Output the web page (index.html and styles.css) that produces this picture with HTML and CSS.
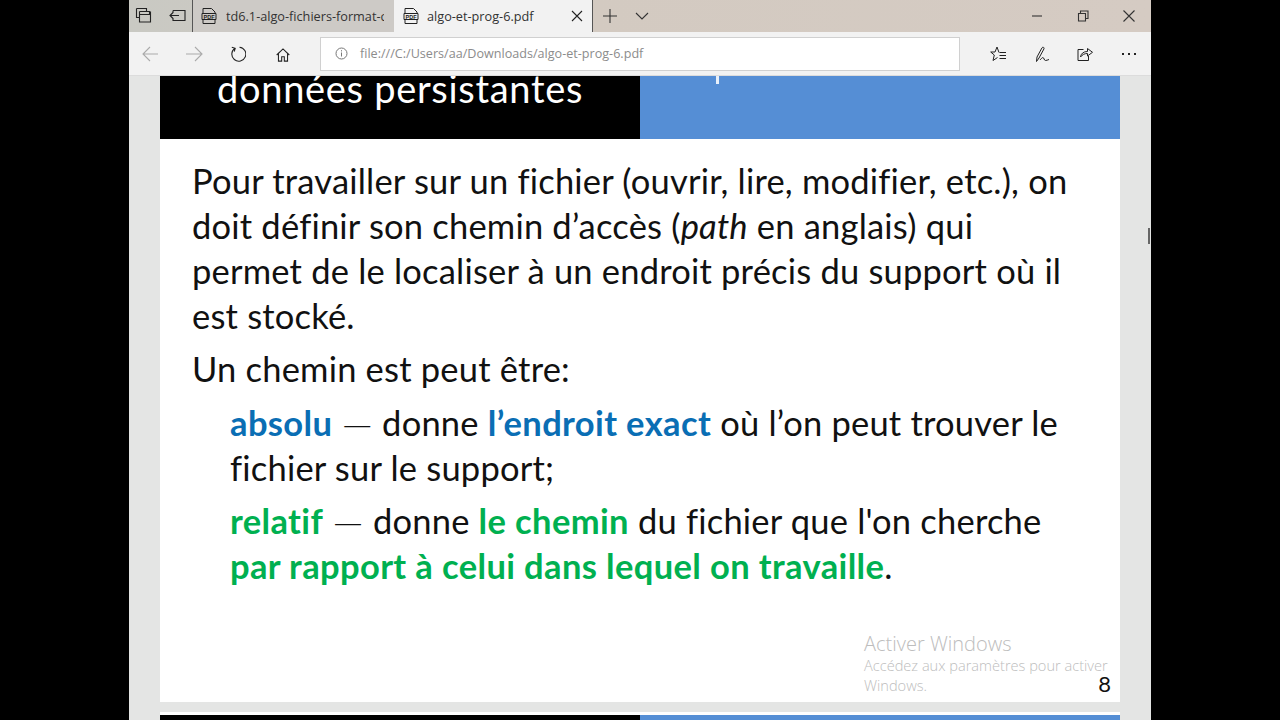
FILE: index.html
```html
<!DOCTYPE html>
<html lang="fr">
<head>
<meta charset="utf-8">
<title>algo-et-prog-6.pdf</title>
<link rel="stylesheet" href="styles.css">
</head>
<body>
<div class="window">
  <div class="tabbar">
    <div class="tab-tools">
      <svg class="ico" width="18" height="18" viewBox="0 0 18 18"><path d="M1.5 1.5h10v3M1.5 1.5v9h3M4.5 4.5h10v3M4.5 4.5v10.500h11v-10.500M4.500 7.500h11" fill="none" stroke="#222" stroke-width="1.100"/></svg>
      <svg class="ico" width="18" height="18" viewBox="0 0 18 18"><path d="M4 3.500h12v10h-12v-2.500M4 6v-2.500M1 8.500h9M4 5.500l-3 3 3 3" fill="none" stroke="#222" stroke-width="1.100"/></svg>
    </div>
    <div class="tab tab-off">
      <svg class="pdf" width="16" height="18" viewBox="0 0 16 18"><path d="M2 6V1.500h8.500L14 5v1M2 13v3.500h12V13M1 6.500h14v6H1z" fill="none" stroke="#222" stroke-width="1"/><text x="8" y="11.500" class="pdf-t">PDF</text></svg>
      <span class="tab-label">td6.1-algo-fichiers-format-c</span>
    </div>
    <div class="tab tab-on">
      <svg class="pdf" width="16" height="18" viewBox="0 0 16 18"><path d="M2 6V1.500h8.500L14 5v1M2 13v3.500h12V13M1 6.500h14v6H1z" fill="none" stroke="#222" stroke-width="1"/><text x="8" y="11.500" class="pdf-t">PDF</text></svg>
      <span class="tab-label">algo-et-prog-6.pdf</span>
      <svg class="tab-x" width="12" height="12" viewBox="0 0 12 12"><path d="M1 1l10 10M11 1L1 11" stroke="#222" stroke-width="1.100"/></svg>
    </div>
    <div class="tab-add">
      <svg width="14" height="14" viewBox="0 0 14 14"><path d="M7 0v14M0 7h14" stroke="#333" stroke-width="1.100"/></svg>
      <svg width="14" height="8" viewBox="0 0 14 8"><path d="M1 1l6 6 6-6" fill="none" stroke="#333" stroke-width="1.100"/></svg>
    </div>
    <div class="win-btns">
      <svg width="12" height="12" viewBox="0 0 12 12"><path d="M1 6h10" stroke="#333" stroke-width="1.100"/></svg>
      <svg width="12" height="12" viewBox="0 0 12 12"><path d="M1.500 3.500h7v7.500h-7zM3.500 3.500V1h7.500v7.500H8.500" fill="none" stroke="#333" stroke-width="1.100"/></svg>
      <svg width="12" height="12" viewBox="0 0 12 12"><path d="M.5.5l11 11M11.500.5l-11 11" stroke="#333" stroke-width="1.100"/></svg>
    </div>
  </div>
  <div class="toolbar">
    <div class="nav">
      <svg width="17" height="16" viewBox="0 0 17 16"><path d="M1 8h15M8 1L1 8l7 7" fill="none" stroke="#aaa" stroke-width="1.100"/></svg>
      <svg width="17" height="16" viewBox="0 0 17 16"><path d="M0 8h15M9 1l7 7-7 7" fill="none" stroke="#aaa" stroke-width="1.100"/></svg>
      <svg width="16" height="16" viewBox="0 0 16 16"><path d="M5 2.300A7 7 0 1 0 9.500 1.200M1.800 1.200L5.200 2.300 4.200 5.600" fill="none" stroke="#222" stroke-width="1.100"/></svg>
      <svg class="home" width="14" height="14" viewBox="0 0 16 16"><path d="M.8 8L8 1l7.200 7M2.800 6.500V15h3.700v-5h3v5h3.700V6.500" fill="none" stroke="#222" stroke-width="1.200"/></svg>
    </div>
    <div class="address">
      <svg width="13" height="13" viewBox="0 0 13 13"><circle cx="6.500" cy="6.500" r="5.500" fill="none" stroke="#777" stroke-width="1"/><path d="M6.500 5.500v4M6.500 3.200v1.200" stroke="#777" stroke-width="1"/></svg>
      <span class="url">file:///C:/Users/aa/Downloads/algo-et-prog-6.pdf</span>
    </div>
    <div class="actions">
      <svg width="17" height="16" viewBox="0 0 17 16"><path d="M9 6.500L7 1 5 6H.7l3.600 3L3 14.500l4.500-3M9.500 6.500h6.500M9.500 9.500h6.500M9.500 12.500h6.500" fill="none" stroke="#222" stroke-width="1"/></svg>
      <svg width="16" height="16" viewBox="0 0 16 16"><path d="M2.500 15.500L3 11 8 1.800C8.800.6 10.500 1.400 10 2.800L5 12zM6 14c1-1 2-2.500 3-2.500S10 14.500 11.500 14.500c1 0 2-.5 3.500-1" fill="none" stroke="#222" stroke-width="1"/></svg>
      <svg width="16" height="16" viewBox="0 0 16 16"><path d="M6.500 3.500H1v11h10.500V10M3.500 11c.5-3.500 3-5.500 7-5.500V2.500l5 3.800-5 3.700V7.500c-3 0-5 1-7 3.500z" fill="none" stroke="#222" stroke-width="1"/></svg>
      <span class="dots"><i></i><i></i><i></i></span>
    </div>
  </div>
  <div class="viewer">
    <div class="scroll-thumb"></div>
    <section class="slide">
      <header class="slide-head">
        <div class="head-left"><span class="head-title">données persistantes</span></div>
        <div class="head-right"><i class="head-mark"></i></div>
      </header>
      <div class="slide-body">
        <p class="para">Pour travailler sur un fichier (ouvrir, lire, modifier, etc.), on<br>doit définir son chemin d’accès (<em>path</em> en anglais) qui<br>permet de le localiser à un endroit précis du support où il<br>est stocké.</p>
        <p class="para gap">Un chemin est peut être:</p>
        <p class="para sub"><b class="blue">absolu</b> <span class="dash">—</span> donne <b class="blue">l’endroit exact</b> où l’on peut trouver le<br>fichier sur le support;</p>
        <p class="para sub sub-last"><b class="green">relatif</b> <span class="dash">—</span> donne <b class="green">le chemin</b> du fichier que l'on cherche<br><b class="green">par rapport à celui dans lequel on travaille</b>.</p>
      </div>
      <div class="activate">
        <div class="act-title">Activer Windows</div>
        <div class="act-sub">Accédez aux paramètres pour activer<br>Windows.</div>
      </div>
      <div class="page-no">8</div>
    </section>
    <section class="slide-next">
      <div class="next-left"></div>
      <div class="next-right"></div>
    </section>
  </div>
</div>
</body>
</html>
```
FILE: styles.css
```css
* { box-sizing: border-box; }
html, body { margin: 0; height: 100%; background: #000; overflow: hidden; }
body { display: flex; justify-content: center; }
.window { width: 1022px; height: 720px; display: flex; flex-direction: column; background: #f2f2f2; font-family: "Open Sans", "Liberation Sans", sans-serif; }

.tabbar { height: 32px; display: flex; align-items: stretch; background: linear-gradient(90deg, #c9c9c3 0%, #d3cac1 45%, #d5cbc3 100%); flex: none; }
.tab-tools { width: 64px; display: flex; align-items: center; gap: 16px; padding-left: 6px; border-right: 1px solid #555; }
.ico { flex: none; }
.tab { display: flex; align-items: center; font-size: 12.700px; color: #333; white-space: nowrap; overflow: hidden; }
.tab-off { width: 201px; padding-left: 8px; background: #cdcac6; }
.tab-on { width: 199px; padding-left: 9px; background: #f2f2f2; border-right: 1px solid #555; }
.tab-label { margin-left: 9px; width: 158px; overflow: hidden; }
.tab-on .tab-label { margin-left: 8px; width: 140px; }
.tab-x { margin-left: 4px; }
.pdf { flex: none; }
.pdf-t { font: 700 5.500px "Liberation Sans", sans-serif; text-anchor: middle; fill: #222; }
.tab-add { display: flex; align-items: center; gap: 18px; padding-left: 10px; }
.win-btns { margin-left: auto; display: flex; align-items: center; gap: 34px; padding-right: 16px; }

.toolbar { height: 44px; flex: none; display: flex; align-items: center; background: #f2f2f2; border-bottom: 1px solid #dcdcdc; }
.nav { width: 191px; display: flex; align-items: center; gap: 27px; padding-left: 13px; }
.home { margin: 2px 0 0 3px; }
.address { width: 640px; height: 34px; background: #fff; border: 1px solid #d0d0d0; display: flex; align-items: center; gap: 12px; padding-left: 14px; }
.url { font-size: 12.600px; color: #8c8c8c; white-space: nowrap; }
.actions { flex: 1; display: flex; align-items: center; gap: 27px; padding-left: 30px; }
.dots { display: flex; gap: 4px; margin-left: 2px; }
.dots i { width: 2px; height: 2px; background: #222; }

.viewer { flex: 1; position: relative; overflow: hidden; background: #e4e5e4; padding-left: 31px; font-family: "Lato", "Liberation Sans", sans-serif; }
.scroll-thumb { position: absolute; right: 1px; top: 152px; width: 2px; height: 16px; background: #666; }

.slide { width: 960px; height: 626px; background: #fff; position: relative; }
.slide-head { height: 63px; display: flex; overflow: hidden; }
.head-left { width: 480px; background: #000; position: relative; }
.head-title { display: block; padding-left: 57px; margin-top: -9px; font-size: 38px; line-height: 42px; color: #fff; letter-spacing: .7px; white-space: nowrap; }
.head-right { flex: 1; background: #558ed5; }
.head-mark { display: block; width: 3px; height: 8px; margin-left: 76px; background: #e8f0fa; }

.slide-body { padding: 19px 0 0 32px; color: #111; font-size: 34.500px; line-height: 45px; letter-spacing: .2px; white-space: nowrap; font-variant-ligatures: none; }
.para { margin: 0; }
.gap { margin-top: 8px; }
.sub { margin: 9px 0 0 38px; }
.sub-last { margin-top: 8px; }
.blue, .green { letter-spacing: .37px; }
.blue { color: #0a6eb4; }
.green { color: #00b050; }
.dash { font-size: 40px; font-weight: 300; line-height: 0; vertical-align: -2px; }

.activate { position: absolute; left: 704px; top: 556px; color: #bdbdbd; font-family: "Open Sans", sans-serif; font-weight: 300; white-space: nowrap; }
.act-title { font-size: 20px; line-height: 23px; }
.act-sub { font-size: 14.600px; line-height: 20px; }
.page-no { position: absolute; right: 9px; top: 595px; font-size: 22px; line-height: 26px; color: #111; }

.slide-next { width: 960px; height: 13px; margin-top: 10px; border-top: 3px solid #fff; display: flex; }
.next-left { width: 480px; background: #000; }
.next-right { flex: 1; background: #558ed5; }
```
